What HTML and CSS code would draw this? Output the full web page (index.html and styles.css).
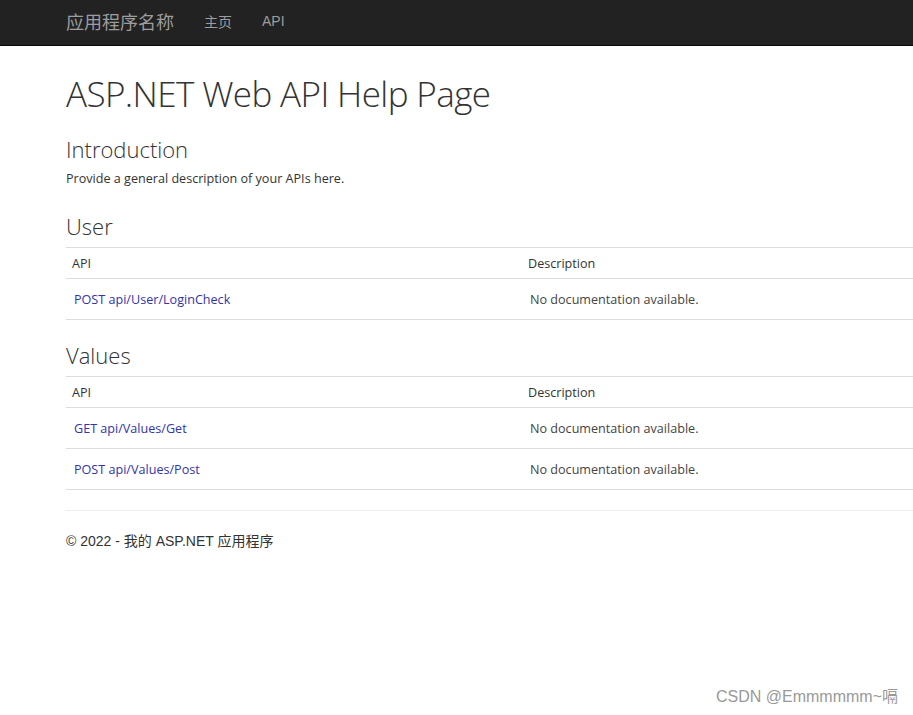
FILE: index.html
```html
<!DOCTYPE html>
<html lang="zh-CN">
<head>
<meta charset="utf-8">
<title>Help Page</title>
<link rel="stylesheet" href="styles.css">
</head>
<body>
<header class="navbar">
  <div class="nav-inner">
    <a class="brand" href="#">应用程序名称</a>
    <a class="nav-link" href="#">主页</a>
    <a class="nav-link" href="#">API</a>
  </div>
</header>
<main class="container">
  <h1 class="title">ASP.NET Web API Help Page</h1>
  <section class="intro">
    <h2 class="section-title">Introduction</h2>
    <p class="intro-text">Provide a general description of your APIs here.</p>
  </section>
  <section class="group">
    <h2 class="section-title">User</h2>
    <table class="api-table">
      <thead>
        <tr><th class="col-api">API</th><th class="col-desc">Description</th></tr>
      </thead>
      <tbody>
        <tr><td class="api-name"><a href="#">POST api/User/LoginCheck</a></td><td class="api-doc">No documentation available.</td></tr>
      </tbody>
    </table>
  </section>
  <section class="group">
    <h2 class="section-title">Values</h2>
    <table class="api-table">
      <thead>
        <tr><th class="col-api">API</th><th class="col-desc">Description</th></tr>
      </thead>
      <tbody>
        <tr><td class="api-name"><a href="#">GET api/Values/Get</a></td><td class="api-doc">No documentation available.</td></tr>
        <tr><td class="api-name"><a href="#">POST api/Values/Post</a></td><td class="api-doc">No documentation available.</td></tr>
      </tbody>
    </table>
  </section>
  <hr class="rule">
  <footer class="footer">© 2022 - 我的 ASP.NET 应用程序</footer>
</main>
<div class="watermark">CSDN @Emmmmmm~嗝</div>
</body>
</html>
```
FILE: styles.css
```css
html, body {
  margin: 0;
  padding: 0;
  overflow: hidden;
  background: #fff;
}
body {
  width: 913px;
  height: 715px;
  position: relative;
  font-family: "Open Sans", "Noto Sans CJK SC", sans-serif;
  color: #333;
}
.navbar {
  height: 46px;
  background: #222;
  border-bottom: 1px solid #080808;
  box-sizing: border-box;
}
.nav-inner {
  padding-left: 66px;
  display: flex;
  align-items: center;
  height: 100%;
}
.brand {
  font-family: "Noto Sans CJK SC", sans-serif;
  font-size: 18px;
  color: #9d9d9d;
  text-decoration: none;
  margin-right: 30px;
  margin-top: -4px;
}
.nav-link {
  font-family: "Liberation Sans", "Noto Sans CJK SC", sans-serif;
  font-size: 14px;
  color: #9d9d9d;
  text-decoration: none;
  margin-right: 30px;
  margin-top: -4px;
}
.container {
  padding-left: 66px;
  width: 847px;
}
.title {
  font-family: "Open Sans", sans-serif;
  font-weight: 300;
  font-size: 35px;
  letter-spacing: -0.6px;
  color: #333;
  margin: 28px 0 0;
  line-height: 40px;
}
.section-title {
  font-family: "Open Sans", sans-serif;
  font-weight: 300;
  font-size: 22px;
  color: #333;
  margin: 0;
  line-height: 30px;
}
.intro {
  margin-top: 20px;
}
.intro-text {
  font-size: 12.6px;
  margin: 6px 0 0;
  line-height: 18px;
}
.group {
  margin-top: 23px;
}
.group + .group {
  margin-top: 20px;
}
.api-table {
  width: 100%;
  border-collapse: collapse;
  margin-top: 6px;
  font-size: 12.6px;
}
.api-table th {
  text-align: left;
  font-weight: 400;
  color: #333;
  height: 30px;
  padding: 0 6px;
  border-top: 1px solid #ddd;
  border-bottom: 1px solid #ddd;
}
.col-api {
  width: 444px;
}
.api-table td {
  height: 40px;
  padding: 0 8px;
  border-bottom: 1px solid #ddd;
}
.api-name a {
  color: #3333aa;
  text-decoration: none;
}
.api-doc {
  color: #444;
}
.rule {
  border: 0;
  border-top: 1px solid #eee;
  margin: 20px 0 0;
}
.footer {
  font-family: "Liberation Sans", "Noto Sans CJK SC", sans-serif;
  font-size: 14px;
  color: #333;
  margin-top: 19px;
}
.watermark {
  position: absolute;
  right: 15px;
  bottom: 8px;
  font-family: "Liberation Sans", "Noto Sans CJK SC", sans-serif;
  font-size: 16px;
  color: #999;
}
```
